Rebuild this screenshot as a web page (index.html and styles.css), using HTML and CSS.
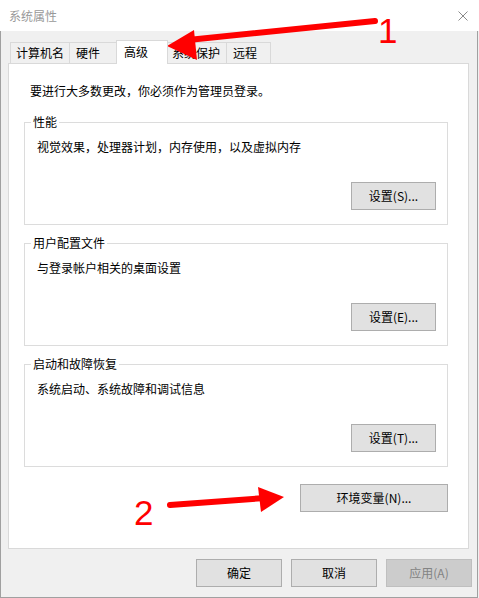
FILE: index.html
```html
<!DOCTYPE html>
<html lang="zh-CN">
<head>
<meta charset="utf-8">
<title>系统属性</title>
<link rel="stylesheet" href="styles.css">
</head>
<body>
<div class="window">
  <div class="titlebar">
    <span class="title">系统属性</span>
    <svg class="close" width="10" height="10" viewBox="0 0 10 10"><path d="M0.5 0.5L9.5 9.5M9.5 0.5L0.5 9.5" stroke="#8a8a8a" stroke-width="1" fill="none"/></svg>
  </div>
  <div class="client">
    <div class="tabs">
      <div class="tab t1">计算机名</div>
      <div class="tab t2">硬件</div>
      <div class="tab active">高级</div>
      <div class="tab t4">系统保护</div>
      <div class="tab t5">远程</div>
    </div>
    <div class="panel">
      <p class="intro">要进行大多数更改，你必须作为管理员登录。</p>
      <fieldset class="group first">
        <legend>性能</legend>
        <p class="desc">视觉效果，处理器计划，内存使用，以及虚拟内存</p>
        <div class="group-actions"><button class="btn btn-set">设置(S)...</button></div>
      </fieldset>
      <fieldset class="group">
        <legend>用户配置文件</legend>
        <p class="desc">与登录帐户相关的桌面设置</p>
        <div class="group-actions"><button class="btn btn-set">设置(E)...</button></div>
      </fieldset>
      <fieldset class="group">
        <legend>启动和故障恢复</legend>
        <p class="desc">系统启动、系统故障和调试信息</p>
        <div class="group-actions"><button class="btn btn-set">设置(T)...</button></div>
      </fieldset>
      <div class="env-row"><button class="btn btn-env">环境变量(N)...</button></div>
    </div>
    <div class="footer">
      <button class="btn btn-foot">确定</button>
      <button class="btn btn-foot">取消</button>
      <button class="btn btn-foot disabled" disabled>应用(A)</button>
    </div>
  </div>
  <svg class="annot" width="479" height="598" viewBox="0 0 479 598">
    <line x1="188" y1="40" x2="375" y2="21" stroke="#ff0000" stroke-width="6" stroke-linecap="round"/>
    <polygon points="167,46 194,30 197,60" fill="#ff0000"/>
    <text x="378" y="43" class="num">1</text>
    <line x1="170" y1="505" x2="265" y2="498" stroke="#ff0000" stroke-width="6" stroke-linecap="round"/>
    <polygon points="284,497 258,487 261,512" fill="#ff0000"/>
    <text x="134" y="525" class="num">2</text>
  </svg>
</div>
</body>
</html>
```
FILE: styles.css
```css
* { box-sizing: border-box; }
html, body { margin: 0; padding: 0; }
body {
  font-family: "Noto Sans CJK SC", "Microsoft YaHei", sans-serif;
  font-size: 12px;
  line-height: 16px;
  color: #000;
  background: #f0f0f0;
}
.window {
  position: relative;
  width: 479px;
  height: 598px;
  background: #f0f0f0;
  overflow: hidden;
}
.titlebar {
  height: 31px;
  background: #fff;
  display: flex;
  align-items: center;
  justify-content: space-between;
  padding: 0 11px 0 9px;
}
.title { color: #999; }
.close { display: block; }
.client {
  width: 478px;
  height: 567px;
  background: #f0f0f0;
  border: 1px solid #a0a0a0;
  border-top: 0;
  padding: 9px 5px 0 7px;
  display: flex;
  flex-direction: column;
}
.tabs {
  display: flex;
  align-items: flex-start;
  height: 24px;
  margin-left: 2px;
  margin-bottom: -1px;
}
.tab {
  height: 21px;
  margin-top: 2px;
  margin-left: -1px;
  border: 1px solid #d9d9d9;
  border-bottom: 0;
  background: #f0f0f0;
  padding: 2px 0 0 6px;
  white-space: nowrap;
}
.t1 { width: 60px; margin-left: 0; padding-left: 5px; }
.t2 { width: 50px; }
.t4 { width: 62px; }
.t5 { width: 45px; }
.tab.active {
  position: relative;
  z-index: 1;
  width: 52px;
  height: 24px;
  margin-top: 0;
  margin-left: -3px;
  margin-right: -2px;
  padding: 3px 0 0 7px;
  background: #fff;
}
.panel {
  width: 461px;
  height: 486px;
  background: #fff;
  border: 1px solid #d9d9d9;
  padding: 19px 20px 0 15px;
}
.intro { margin: 0; padding-left: 6px; }
.group {
  margin: 10px 0 0 0;
  padding: 0 11px 14px 12px;
  border: 1px solid #dcdcdc;
  min-inline-size: 0;
}
.group.first { margin-top: 15px; }
.group legend {
  padding: 0 2px;
  margin-left: -6px;
  line-height: 16px;
}
.desc { margin: 9px 0 0 0; }
.group-actions {
  display: flex;
  justify-content: flex-end;
  margin-top: 27px;
}
.btn {
  font-family: inherit;
  font-size: 12px;
  line-height: 16px;
  color: #000;
  background: #e1e1e1;
  border: 1px solid #adadad;
  border-radius: 0;
  padding: 0;
  height: 28px;
}
.btn-set { width: 85px; }
.env-row {
  display: flex;
  justify-content: flex-end;
  margin-top: 17px;
}
.btn-env { width: 148px; }
.footer {
  display: flex;
  justify-content: flex-end;
  gap: 9px;
  margin-top: 10px;
}
.btn-foot { width: 86px; }
.btn.disabled {
  background: #cccccc;
  border-color: #bfbfbf;
  color: #838383;
}
.annot {
  position: absolute;
  left: 0;
  top: 0;
  pointer-events: none;
}
.num {
  font-family: "Liberation Sans", Arial, sans-serif;
  font-size: 35px;
  fill: #ff0000;
}
```
